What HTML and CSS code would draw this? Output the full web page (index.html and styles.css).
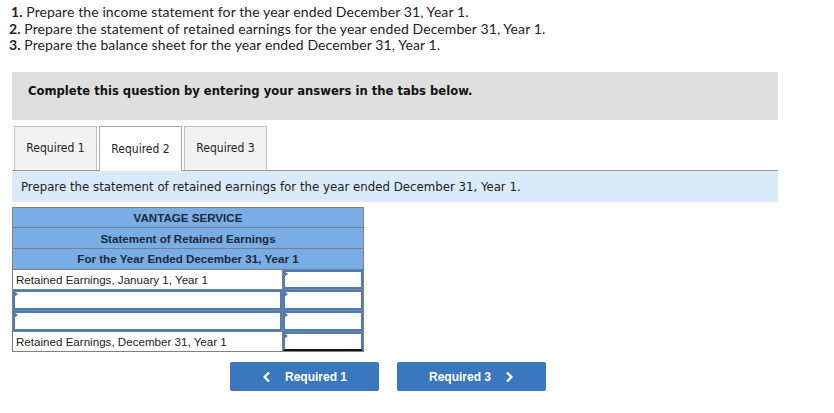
FILE: index.html
```html
<!DOCTYPE html>
<html>
<head>
<meta charset="utf-8">
<link rel="stylesheet" href="styles.css">
</head>
<body>
<div class="page">
  <div class="reqs">
    <div class="req first"><b>1.</b> Prepare the income statement for the year ended December 31, Year 1.</div>
    <div class="req"><b>2.</b> Prepare the statement of retained earnings for the year ended December 31, Year 1.</div>
    <div class="req"><b>3.</b> Prepare the balance sheet for the year ended December 31, Year 1.</div>
  </div>
  <div class="notice">Complete this question by entering your answers in the tabs below.</div>
  <div class="tabs">
    <div class="tab">Required 1</div>
    <div class="tab active">Required 2</div>
    <div class="tab">Required 3</div>
  </div>
  <div class="instr">Prepare the statement of retained earnings for the year ended December 31, Year 1.</div>
  <table class="stmt">
    <tr><th colspan="2">VANTAGE SERVICE</th></tr>
    <tr><th colspan="2">Statement of Retained Earnings</th></tr>
    <tr><th colspan="2">For the Year Ended December 31, Year 1</th></tr>
    <tr><td class="label">Retained Earnings, January 1, Year 1</td><td class="amt"><div class="inp"><span class="mark"></span></div></td></tr>
    <tr><td class="label in"><div class="inp"><span class="mark"></span></div></td><td class="amt"><div class="inp"><span class="mark"></span></div></td></tr>
    <tr><td class="label in"><div class="inp"><span class="mark"></span></div></td><td class="amt"><div class="inp"><span class="mark"></span></div></td></tr>
    <tr><td class="label">Retained Earnings, December 31, Year 1</td><td class="amt"><div class="inp total"><span class="mark"></span></div></td></tr>
  </table>
  <div class="nav">
    <div class="btn prev"><svg width="10" height="12" viewBox="0 0 10 12"><path d="M7 1.5 L2.5 6 L7 10.5" fill="none" stroke="#fff" stroke-width="2.2"/></svg><span>Required 1</span></div>
    <div class="btn next"><span>Required 3</span><svg width="10" height="12" viewBox="0 0 10 12"><path d="M3 1.5 L7.5 6 L3 10.5" fill="none" stroke="#fff" stroke-width="2.2"/></svg></div>
  </div>
</div>
</body>
</html>
```

FILE: styles.css
```css
body {
  margin: 0;
  background: #fff;
}
.page {
  padding: 4px 0 0 12px;
  width: 766px;
}
.reqs {
  font-family: Lato, "Open Sans", sans-serif;
  font-size: 14px;
  letter-spacing: 0.1px;
  color: #222;
  margin-left: -3px;
}
.req {
  height: 16.5px;
  line-height: 16.5px;
}
.req.first {
  padding-left: 2px;
}
.req b {
  font-weight: 700;
}
.notice {
  margin-top: 18px;
  height: 48px;
  box-sizing: border-box;
  padding: 11px 0 0 16px;
  background: #dfdfdf;
  font-family: "DejaVu Sans Condensed", "DejaVu Sans", sans-serif;
  font-weight: bold;
  font-size: 12.9px;
  line-height: 16px;
  color: #111;
}
.tabs {
  margin-top: 6px;
  display: flex;
  gap: 2px;
  padding-left: 2px;
  height: 44px;
  border-bottom: 1px solid #999;
}
.tab {
  width: 83px;
  height: 44px;
  box-sizing: border-box;
  border: 1px solid #c2c2c2;
  border-bottom: none;
  background: #f2f2f2;
  font-family: "DejaVu Sans Condensed", "DejaVu Sans", sans-serif;
  font-size: 12px;
  color: #222;
  display: flex;
  align-items: center;
  justify-content: center;
}
.tab.active {
  background: #fff;
  border-color: #aaa;
  height: 45px;
  margin-bottom: -1px;
  position: relative;
}
.instr {
  height: 31px;
  box-sizing: border-box;
  background: #d9eaf8;
  padding: 8px 0 0 9px;
  font-family: "DejaVu Sans Condensed", "DejaVu Sans", sans-serif;
  font-size: 13.1px;
  line-height: 16px;
  color: #222;
}
.stmt {
  margin-top: 5px;
  border-collapse: collapse;
  width: 352px;
  font-family: "Liberation Sans", Arial, sans-serif;
  font-size: 11.6px;
  color: #222;
}
.stmt th, .stmt td {
  border: 1px solid #808080;
  height: 20.7px;
  padding: 0;
  box-sizing: border-box;
}
.stmt tr:last-child td {
  height: 20px;
}
.stmt th {
  background: #79ade6;
  font-weight: bold;
  text-align: center;
  color: #1f2a36;
}
.stmt td.label {
  width: 271px;
  padding-left: 3px;
  text-align: left;
}
.stmt td.label.in {
  padding: 0;
}
.stmt td.amt {
  width: 81px;
  padding: 0;
}
.inp {
  position: relative;
  height: 19.6px;
  box-sizing: border-box;
  border: 2px solid #4c7db8;
  background: #fff;
}
.inp.total {
  border-bottom: 2px solid #111;
}
.mark {
  position: absolute;
  left: -1px;
  top: -1px;
  width: 0;
  height: 0;
  border-top: 3px solid transparent;
  border-bottom: 3px solid transparent;
  border-left: 4px solid #4c7db8;
}
.nav {
  margin-top: 10px;
  display: flex;
  gap: 18px;
  padding-left: 218px;
}
.btn {
  width: 149px;
  height: 29px;
  box-sizing: border-box;
  background: #3a77bc;
  border-radius: 2px;
  color: #fff;
  font-family: "Liberation Sans", Arial, sans-serif;
  font-weight: bold;
  font-size: 12px;
  display: flex;
  align-items: center;
  justify-content: center;
  gap: 13px;
}
```
